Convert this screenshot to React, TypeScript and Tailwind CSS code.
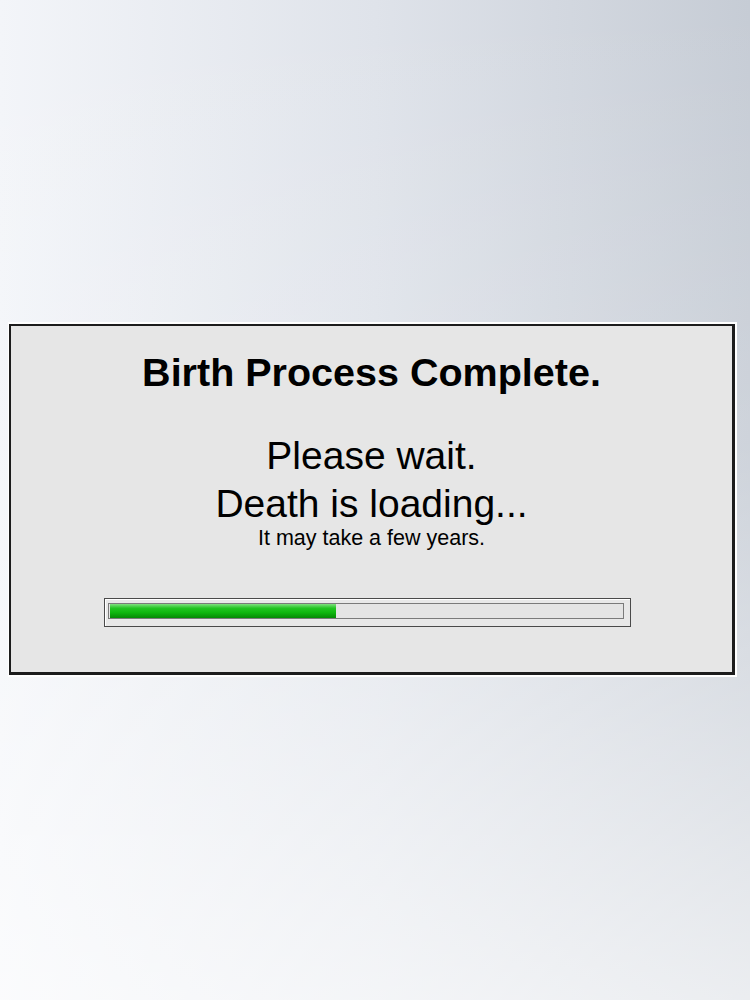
export default function App() {
  const progress = 226

  return (
    <div className="w-[750px] h-[1000px] pt-[322px] pl-[8px] bg-[linear-gradient(to_bottom,rgba(255,255,255,0)_0%,rgba(255,255,255,0.15)_45%,rgba(255,255,255,0.65)_100%),linear-gradient(to_right,#f3f5f9_0%,#dfe3ea_50%,#c6ccd5_100%)] font-['Liberation_Sans',Arial,sans-serif] text-black">
      <div className="w-[729px] h-[355px] bg-white pt-[2px] pl-[1px] pr-[2px] pb-[2px]">
        <div className="h-full border-t-2 border-l-2 border-r-[3px] border-b-[3px] border-[#1c1c1c] bg-[#e6e6e6] flex flex-col items-center pt-[26px]">
          <h1 className="text-[39.5px] leading-[40px] font-bold">Birth Process Complete.</h1>
          <p className="mt-[40px] text-[39px] leading-[48px]">Please wait.</p>
          <p className="text-[39px] leading-[48px]">Death is loading...</p>
          <p className="text-[21.5px] leading-[20px]">It may take a few years.</p>

          <div className="self-start ml-[93px] mt-[50px] w-[527px] h-[29px] border border-[#4a4a4a] bg-[#e8e8e8] shadow-[inset_1px_1px_0_#ffffff] pt-[4px] pl-[3px] pr-[6px] pb-[7px]">
            <div className="h-full border border-[#7a7a7a] bg-[#e4e4e4] px-[1px]">
              <div
                className="h-full bg-[linear-gradient(to_bottom,#7fe07f_0%,#22c422_30%,#0fb80f_60%,#058a05_100%)]"
                style={{ width: progress }}
              />
            </div>
          </div>
        </div>
      </div>
    </div>
  )
}
